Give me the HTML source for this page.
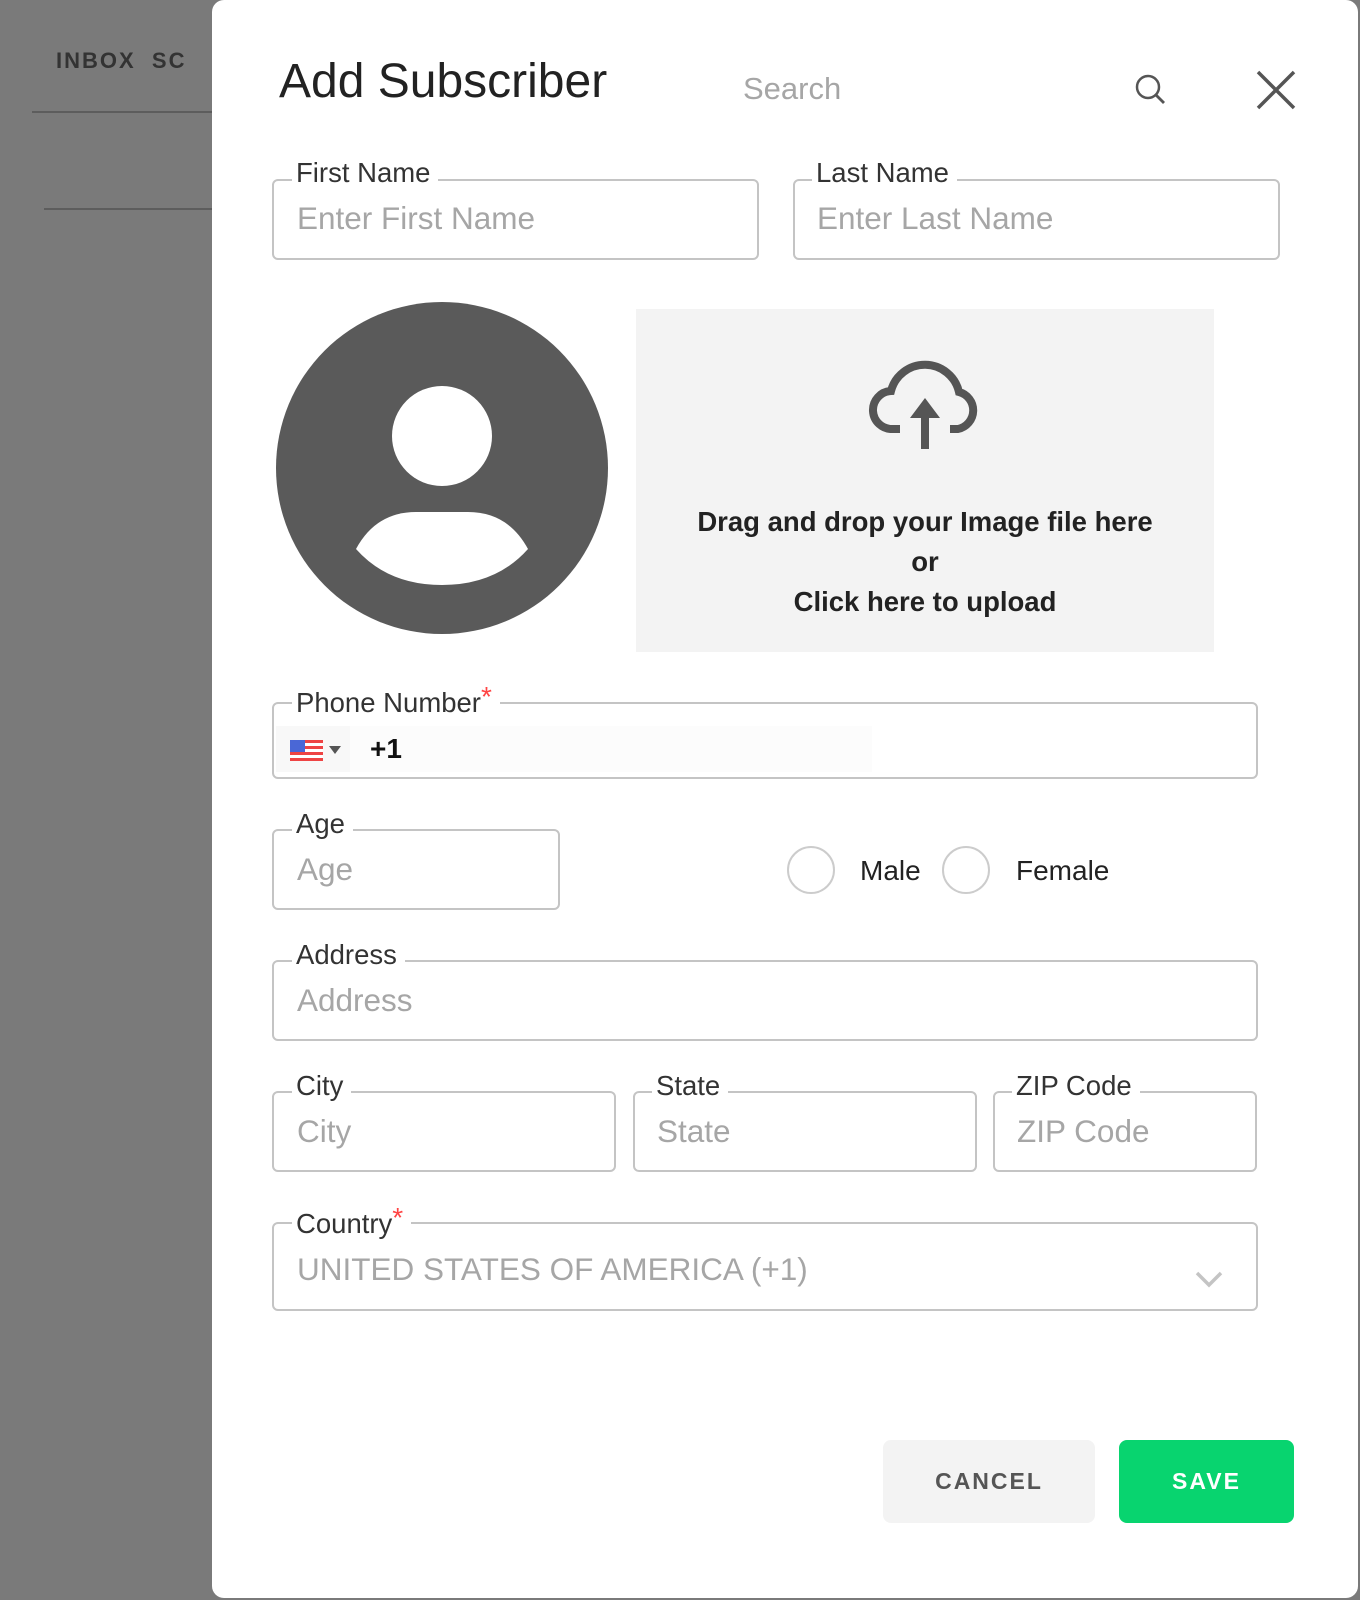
<!DOCTYPE html>
<html><head><meta charset="utf-8"><style>
*{box-sizing:border-box;margin:0;padding:0}
body{width:1360px;height:1600px;background:#7a7a7a;position:relative;overflow:hidden;font-family:"Liberation Sans",sans-serif;color:#222}
.a{position:absolute}
.modal{left:212px;top:0;width:1146px;height:1598px;background:#fff;border-radius:12px}
.box{position:absolute;border:2px solid #c4c4c4;border-radius:6px}
.lbl{position:absolute;font-size:27.5px;color:#333;background:#fff;padding:0 8px 0 4px;line-height:28px}
.ph{position:absolute;font-size:31.5px;color:#a6a6a6;line-height:34px}
.req{color:#f44;font-size:28px;position:relative;top:-6px}
.radio{position:absolute;width:48px;height:48px;border:2px solid #ccc;border-radius:50%}
.btn{position:absolute;border-radius:8px;font-weight:bold;font-size:23px;letter-spacing:2px;display:flex;align-items:center;justify-content:center}
</style></head><body>
<div class="a" style="left:56px;top:48px;font-size:22px;font-weight:bold;color:#333;letter-spacing:2px">INBOX&nbsp;&nbsp;SC</div>
<div class="a" style="left:32px;top:111px;width:190px;height:2px;background:#5d5d5d"></div>
<div class="a" style="left:44px;top:208px;width:180px;height:2px;background:#5d5d5d"></div>
<div class="a modal"></div>

<div class="a" style="left:279px;top:54px;font-size:48px;color:#222">Add Subscriber</div>
<div class="a" style="left:743px;top:71px;font-size:31px;color:#a6a6a6">Search</div>
<svg class="a" style="left:1130px;top:70px" width="40" height="40" viewBox="0 0 40 40"><circle cx="18" cy="17" r="11" fill="none" stroke="#555" stroke-width="2.5"/><line x1="26" y1="25" x2="34" y2="33" stroke="#555" stroke-width="2.8"/></svg>
<svg class="a" style="left:1254px;top:68px" width="44" height="44" viewBox="0 0 44 44"><path d="M4 4L40 40M40 4L4 40" stroke="#555" stroke-width="3.5"/></svg>

<div class="box" style="left:272px;top:179px;width:487px;height:81px"></div>
<div class="lbl" style="left:292px;top:159px">First Name</div>
<div class="ph" style="left:297px;top:201px">Enter First Name</div>
<div class="box" style="left:793px;top:179px;width:487px;height:81px"></div>
<div class="lbl" style="left:812px;top:159px">Last Name</div>
<div class="ph" style="left:817px;top:201px">Enter Last Name</div>

<svg class="a" style="left:276px;top:302px" width="334" height="334" viewBox="0 0 334 334"><circle cx="166" cy="166" r="166" fill="#5a5a5a"/><ellipse cx="166" cy="134" rx="50" ry="50" fill="#fff"/><path d="M80 247 Q100 210 140 210 H192 Q232 210 252 247 Q220 283 166 283 Q112 283 80 247Z" fill="#fff"/></svg>

<div class="a" style="left:636px;top:309px;width:578px;height:343px;background:#f3f3f3"></div>
<svg class="a" style="left:0;top:0" width="1360" height="700"><path d="M900 429 H893 A19 19 0 0 1 891 391 A35 35 0 0 1 959 392 A19 19 0 0 1 958 429 H950" fill="none" stroke="#555" stroke-width="8"/><polygon points="925,398 910,418 940,418" fill="#555"/><rect x="921" y="415" width="8" height="34" fill="#555"/></svg>
<div class="a" style="left:636px;top:502px;width:578px;text-align:center;font-size:27.5px;font-weight:bold;line-height:40px;color:#222">Drag and drop your Image file here<br>or<br>Click here to upload</div>

<div class="box" style="left:272px;top:702px;width:986px;height:77px"></div>
<div class="lbl" style="left:292px;top:689px">Phone Number<span class="req">*</span></div>
<div class="a" style="left:276px;top:726px;width:596px;height:46px;background:#fcfcfc"></div>
<div class="a" style="left:276px;top:726px;width:74px;height:46px;background:#f8f8f8"></div>
<svg class="a" style="left:290px;top:740px" width="33" height="21" viewBox="0 0 33 21"><rect width="33" height="21" fill="#fff"/><g fill="#e44"><rect y="0" width="33" height="3"/><rect y="6" width="33" height="3"/><rect y="12" width="33" height="3"/><rect y="18" width="33" height="3"/></g><rect width="15" height="12" fill="#4a67d6"/></svg>
<svg class="a" style="left:329px;top:746px" width="12" height="8"><polygon points="0,0 12,0 6,8" fill="#555"/></svg>
<div class="a" style="left:370px;top:733px;font-size:28px;font-weight:bold;color:#111">+1</div>

<div class="box" style="left:272px;top:829px;width:288px;height:81px"></div>
<div class="lbl" style="left:292px;top:810px">Age</div>
<div class="ph" style="left:297px;top:852px">Age</div>
<div class="radio" style="left:787px;top:846px"></div>
<div class="a" style="left:860px;top:855px;font-size:28px;color:#222">Male</div>
<div class="radio" style="left:942px;top:846px"></div>
<div class="a" style="left:1016px;top:855px;font-size:28px;color:#222">Female</div>

<div class="box" style="left:272px;top:960px;width:986px;height:81px"></div>
<div class="lbl" style="left:292px;top:941px">Address</div>
<div class="ph" style="left:297px;top:983px">Address</div>

<div class="box" style="left:272px;top:1091px;width:344px;height:81px"></div>
<div class="lbl" style="left:292px;top:1072px">City</div>
<div class="ph" style="left:297px;top:1114px">City</div>
<div class="box" style="left:633px;top:1091px;width:344px;height:81px"></div>
<div class="lbl" style="left:652px;top:1072px">State</div>
<div class="ph" style="left:657px;top:1114px">State</div>
<div class="box" style="left:993px;top:1091px;width:264px;height:81px"></div>
<div class="lbl" style="left:1012px;top:1072px">ZIP Code</div>
<div class="ph" style="left:1017px;top:1114px">ZIP Code</div>

<div class="box" style="left:272px;top:1222px;width:986px;height:89px"></div>
<div class="lbl" style="left:292px;top:1210px">Country<span class="req">*</span></div>
<div class="ph" style="left:297px;top:1252px">UNITED STATES OF AMERICA (+1)</div>
<svg class="a" style="left:1195px;top:1271px" width="28" height="18"><path d="M2 2L14 14L26 2" fill="none" stroke="#c4c4c4" stroke-width="3.5"/></svg>

<div class="btn" style="left:883px;top:1440px;width:212px;height:83px;background:#f3f3f3;color:#555">CANCEL</div>
<div class="btn" style="left:1119px;top:1440px;width:175px;height:83px;background:#08d46f;color:#fff">SAVE</div>
</body></html>
